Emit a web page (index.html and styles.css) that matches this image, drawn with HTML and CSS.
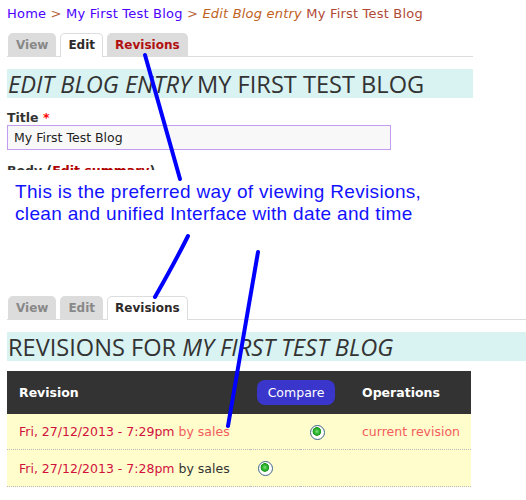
FILE: index.html
```html
<!DOCTYPE html>
<html>
<head>
<meta charset="utf-8">
<link rel="stylesheet" href="styles.css">
</head>
<body>
<div class="page">
  <section class="shot shot-top">
    <nav class="breadcrumb"><a class="bc-link">Home</a> <span class="sep">&gt;</span> <a class="bc-link">My First Test Blog</a> <span class="sep">&gt;</span> <em class="bc-cur">Edit Blog entry</em> <span class="bc-title">My First Test Blog</span></nav>
    <ul class="tabs">
      <li class="tab">View</li>
      <li class="tab active">Edit</li>
      <li class="tab tab-red">Revisions</li>
    </ul>
    <h1 class="heading"><em>Edit Blog entry</em> My First Test Blog</h1>
    <div class="form">
      <div class="label">Title <span class="req">*</span></div>
      <div class="input">My First Test Blog</div>
      <div class="label body-label">Body (<a class="red">Edit summary</a>)</div>
    </div>
  </section>

  <div class="note">This is the preferred way of viewing Revisions,<br>clean and unified Interface with date and time</div>

  <section class="shot shot-bottom">
    <ul class="tabs">
      <li class="tab">View</li>
      <li class="tab">Edit</li>
      <li class="tab active">Revisions</li>
    </ul>
    <h1 class="heading">Revisions for <em>My First Test Blog</em></h1>
    <table class="revs">
      <colgroup><col class="c1"><col class="c2"><col class="c3"><col class="c4"></colgroup>
      <thead>
        <tr><th>Revision</th><th colspan="2" class="th-compare"><span class="btn">Compare</span></th><th class="th-ops">Operations</th></tr>
      </thead>
      <tbody>
        <tr class="row-current"><td><span class="date">Fri, 27/12/2013 - 7:29pm</span> <span class="by">by sales</span></td><td></td><td class="cell-b"><span class="radio"></span></td><td class="ops">current revision</td></tr>
        <tr><td><span class="date">Fri, 27/12/2013 - 7:28pm</span> <span class="by-dark">by sales</span></td><td class="cell-a"><span class="radio"></span></td><td></td><td></td></tr>
      </tbody>
    </table>
  </section>

  <svg class="arrows" width="526" height="500" viewBox="0 0 526 500">
    <g stroke="#0000ff" stroke-width="4" stroke-linecap="round" fill="none">
      <path d="M145 55 L180 179"/>
      <path d="M188 236 Q175 262 155 297"/>
      <path d="M258 252 L228 426"/>
    </g>
  </svg>
</div>
</body>
</html>
```

FILE: styles.css
```css
html, body {
  margin: 0;
  padding: 0;
  background: #fff;
}
.page {
  position: relative;
  width: 526px;
  height: 500px;
  overflow: hidden;
  font-family: "DejaVu Sans", Verdana, sans-serif;
  font-size: 12px;
  color: #333;
}
.shot {
  padding-left: 7px;
}
.shot-top {
  width: 466px;
  height: 170px;
  overflow: hidden;
}
.breadcrumb {
  padding-top: 6px;
  height: 16px;
  line-height: 16px;
  font-size: 13px;
  letter-spacing: 0.2px;
  white-space: nowrap;
  color: #b5651d;
}
.bc-link { color: #4b00ff; }
.sep { color: #b8663a; }
.bc-cur { color: #c0621c; }
.bc-title { color: #b04a36; }

.tabs {
  list-style: none;
  margin: 11px 0 0 0;
  padding: 0 0 0 1px;
  display: flex;
  gap: 4px;
  border-bottom: 1px solid #dcdcdc;
  height: 23px;
}
.tab {
  height: 23px;
  box-sizing: border-box;
  padding: 0 7px;
  line-height: 23px;
  background: #dcdcdc;
  border: 1px solid #dcdcdc;
  border-bottom: none;
  border-radius: 5px 5px 0 0;
  font-weight: bold;
  font-size: 12px;
  color: #888;
}
.tab.active {
  background: #fff;
  color: #2e2a2a;
  height: 24px;
}
.tab-red { color: #b21010; }

.heading {
  margin: 12px 0 0 0;
  height: 29px;
  line-height: 30px;
  background: #d9f2f2;
  font-family: "Open Sans", sans-serif;
  font-weight: normal;
  font-size: 23.6px;
  text-transform: uppercase;
  color: #333;
  padding-left: 1px;
  white-space: nowrap;
}
.heading em { font-style: italic; }

.label {
  margin-top: 12px;
  line-height: 15px;
  font-weight: bold;
  font-size: 12.5px;
  color: #333;
}
.req { color: #ff0000; }
.input {
  margin-top: 0;
  width: 384px;
  height: 25px;
  box-sizing: border-box;
  border: 1px solid #c39cf0;
  background: #f8f8f8;
  padding-left: 6px;
  line-height: 23px;
  font-size: 12.5px;
  color: #222;
}
.body-label { margin-top: 13px; }
.red { color: #b10000; }

.note {
  height: 126px;
  box-sizing: border-box;
  padding: 11px 0 0 15px;
  font-family: "Liberation Sans", Arial, sans-serif;
  font-size: 19px;
  letter-spacing: 0.33px;
  line-height: 22px;
  color: #1212ff;
}

.shot-bottom .tabs { margin-top: 0; }
.shot-bottom .heading { margin-top: 12px; }

.revs {
  margin-top: 10px;
  border-collapse: collapse;
  table-layout: fixed;
  width: 464px;
  font-size: 12.5px;
}
.c1 { width: 243px; }
.c2 { width: 50px; }
.c3 { width: 50px; }
.c4 { width: 121px; }
.revs th {
  background: #333;
  color: #fff;
  height: 43px;
  padding: 0 0 0 12px;
  text-align: left;
  font-weight: bold;
  font-size: 12.5px;
}
.revs th.th-compare { padding-left: 7px; }
.btn {
  display: inline-block;
  width: 78px;
  height: 25px;
  line-height: 25px;
  text-align: center;
  border-radius: 8px;
  background: #3a36cc;
  color: #fff;
  font-weight: normal;
  font-size: 12.5px;
}
.revs td {
  background: #fffdcc;
  height: 36px;
  padding: 0 0 0 12px;
  border-bottom: 1px dotted #bbb;
  white-space: nowrap;
}
.revs tbody tr:first-child td { height: 35px; }
.revs td.cell-a { padding-left: 8px; }
.revs td.cell-b { padding-left: 10px; }
.date { color: #d1103c; }
.by { color: #f25c5c; }
.by-dark { color: #333; }
.ops { color: #f25c5c; }
.radio {
  display: inline-block;
  vertical-align: middle;
  width: 15px;
  height: 15px;
  box-sizing: border-box;
  border-radius: 50%;
  border: 1.5px solid #3f6487;
  background: radial-gradient(circle at 45% 42%, #7ee07e 0, #2fb52f 2.5px, #1f9a1f 4px, #fff 4.6px);
}

.arrows {
  position: absolute;
  left: 0;
  top: 0;
  pointer-events: none;
}
```
